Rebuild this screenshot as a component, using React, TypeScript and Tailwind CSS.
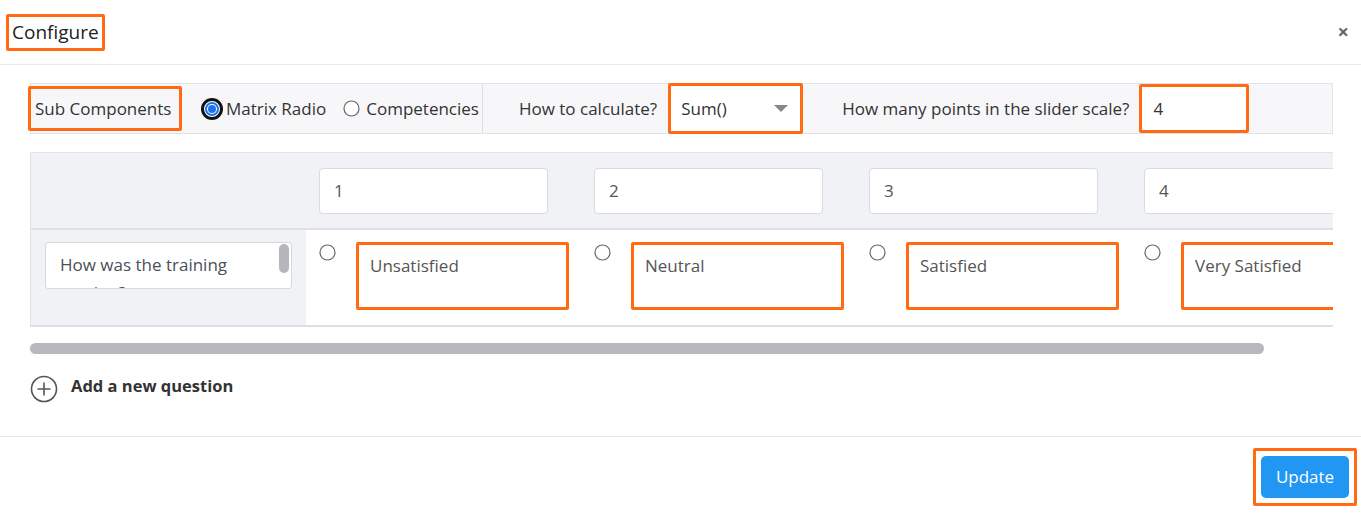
import React from "react";

const font = { fontFamily: '"Open Sans", "Noto Sans", sans-serif' };

function Mark({ children, className = "" }: { children: React.ReactNode; className?: string }) {
  // orange annotation box
  return <div className={`border-[3px] border-[#ff6a13] rounded-[2px] ${className}`}>{children}</div>;
}

function Radio({ on = false }: { on?: boolean }) {
  if (on)
    return (
      <svg width="22" height="22" viewBox="0 0 22 22" className="shrink-0">
        <circle cx="11" cy="11" r="9.5" fill="#fff" stroke="#111" strokeWidth="3" />
        <circle cx="11" cy="11" r="7" fill="#1a73e8" />
        <circle cx="11" cy="11" r="5" fill="#fff" />
        <circle cx="11" cy="11" r="4" fill="#1a73e8" />
      </svg>
    );
  return (
    <svg width="17" height="17" viewBox="0 0 17 17" className="shrink-0">
      <circle cx="8.5" cy="8.5" r="7.5" fill="#fff" stroke="#666" strokeWidth="1.2" />
    </svg>
  );
}

const columns = [
  { n: "1", label: "Unsatisfied" },
  { n: "2", label: "Neutral" },
  { n: "3", label: "Satisfied" },
  { n: "4", label: "Very Satisfied" },
];

export default function App() {
  return (
    <div className="w-[1361px] h-[513px] bg-white text-[#333] overflow-hidden" style={font}>
      {/* Header */}
      <div className="h-[65px] flex items-center justify-between pl-[6px] pr-[12px] border-b border-[#e6e9ee]">
        <Mark className="px-[3px] h-[37px] flex items-center">
          <span className="text-[19px] text-[#222]">Configure</span>
        </Mark>
        <span className="text-[20px] font-bold text-[#666] leading-none">×</span>
      </div>

      <div className="px-[30px] pt-[18px]">
        {/* Toolbar */}
        <div className="h-[51px] w-[1303px] flex items-center bg-[#f7f7f9] border border-[#e3e3e7] text-[17px]">
          <Mark className="ml-[-3px] w-[154px] h-[45px] flex items-center pl-[4px]">Sub Components</Mark>
          <div className="flex items-center ml-[19px]">
            <Radio on />
            <span className="ml-[3px]">Matrix Radio</span>
          </div>
          <div className="flex items-center ml-[17px] gap-[6px]">
            <Radio />
            <span>Competencies</span>
          </div>
          <div className="ml-[3px] w-px h-full bg-[#e0e0e4]" />
          <span className="ml-[36px]">How to calculate?</span>
          <Mark className="ml-[11px] w-[135px] h-[51px] bg-white flex items-center justify-between pl-[10px] pr-[12px]">
            <span>Sum()</span>
            <svg width="14" height="8" viewBox="0 0 14 8">
              <path d="M0 0 H14 L7 7 Z" fill="#888" />
            </svg>
          </Mark>
          <span className="ml-[39px]">How many points in the slider scale?</span>
          <Mark className="ml-[10px] w-[110px] h-[49px] bg-white flex items-center pl-[11px]">4</Mark>
        </div>

        {/* Matrix */}
        <div className="mt-[18px] w-[1303px] overflow-hidden border-t border-l border-[#e2e2e6]">
          <div className="flex bg-[#f1f2f6] h-[77px] border-b-2 border-[#e0e0e4] w-max">
            <div className="w-[275px]" />
            {columns.map((c) => (
              <div key={c.n} className="w-[275px] pl-[13px] pt-[15px]">
                <div className="w-[229px] h-[46px] bg-white border border-[#d9dbe0] rounded-[4px] flex items-center pl-[14px] text-[17px] text-[#555]">
                  {c.n}
                </div>
              </div>
            ))}
          </div>
          <div className="flex h-[97px] border-b-2 border-[#e0e0e4] w-max">
            <div className="w-[275px] bg-[#f1f2f6] pl-[14px] pt-[12px]">
              <div className="relative w-[247px] h-[47px] bg-white border border-[#d6d8dd] rounded-[3px] overflow-hidden pl-[14px] pt-[8px] text-[17px] leading-[28px] text-[#4a4f5a]">
                How was the training
                <br />
                session?
                <div className="absolute right-[2px] top-[1px] w-[10px] h-[29px] rounded-full bg-[#b5b5ba]" />
              </div>
            </div>
            {columns.map((c) => (
              <div key={c.label} className="w-[275px] flex pl-[13px] pt-[14px]">
                <Radio />
                <Mark className="ml-[20px] mt-[-2px] w-[213px] h-[68px] bg-white pl-[11px] pt-[8px] text-[17px] text-[#555]">
                  {c.label}
                </Mark>
              </div>
            ))}
          </div>
        </div>

        {/* Scrollbar */}
        <div className="mt-[16px] w-[1234px] h-[11px] rounded-full bg-[#b8b8bd]" />

        {/* Add question */}
        <div className="mt-[21px] flex items-center gap-[13px]">
          <svg width="28" height="28" viewBox="0 0 28 28">
            <circle cx="14" cy="14" r="12.5" fill="none" stroke="#555" strokeWidth="1.6" />
            <path d="M14 7.5 V20.5 M7.5 14 H20.5" stroke="#555" strokeWidth="1.6" />
          </svg>
          <span className="text-[16.5px] font-bold text-[#333] -mt-[6px]">Add a new question</span>
        </div>
      </div>

      {/* Footer */}
      <div className="mt-[33px] border-t border-[#e6e9ee] h-[77px] flex items-start justify-end pt-[11px] pr-[4px]">
        <Mark className="p-[5px]">
          <button className="w-[88px] h-[42px] rounded-[5px] bg-[#2196f3] text-white text-[17px]">Update</button>
        </Mark>
      </div>
    </div>
  );
}
